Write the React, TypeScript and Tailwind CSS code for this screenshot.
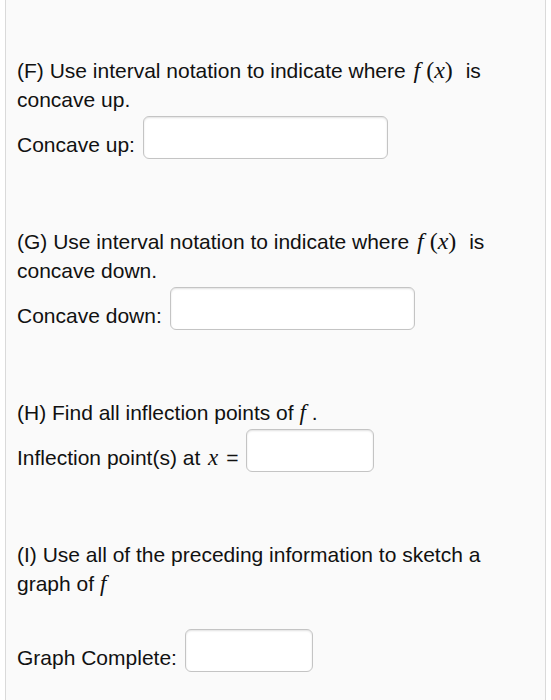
import React from 'react';

const MathVar = ({ children }: { children: React.ReactNode }) => (
    <span className="font-['Liberation_Serif',serif] italic text-[23px]">{children}</span>
);

const Fx = () => (
    <span className="font-['Liberation_Serif',serif] text-[24px] ml-[2px] mr-[7px]">
        <span className="italic mr-[6px]">f</span>(<span className="italic">x</span>)
    </span>
);

const Box = ({ width }: { width: number }) => (
    <input
        type="text"
        style={{ width }}
        className="h-[43px] rounded-[6px] border border-[#c4c4c4] bg-white shadow-[inset_0_1px_2px_rgba(0,0,0,0.12)] outline-none"
    />
);

const Row = ({ label, width }: { label: React.ReactNode; width: number }) => (
    <div className="flex items-end gap-[8px] mt-[2px]">
        <span>{label}</span>
        <Box width={width} />
    </div>
);

export default function App() {
    return (
        <div className="min-h-[700px] bg-white">
            <div className="ml-[5px] w-[541px] min-h-[700px] border-x border-[#dadada] bg-[#fafafa] pl-[11px] pt-[56px] text-[21px] leading-[29px] text-[#111] font-['Liberation_Sans',Arial,sans-serif]">
                <section>
                    <p>(F) Use interval notation to indicate where <Fx /> is</p>
                    <p>concave up.</p>
                    <Row label="Concave up:" width={245} />
                </section>

                <section className="mt-[68px]">
                    <p>(G) Use interval notation to indicate where <Fx /> is</p>
                    <p>concave down.</p>
                    <Row label="Concave down:" width={245} />
                </section>

                <section className="mt-[68px]">
                    <p>(H) Find all inflection points of <MathVar>f</MathVar> .</p>
                    <Row
                        label={<>Inflection point(s) at <span className="mx-[2px]"><MathVar>x</MathVar></span> =</>}
                        width={128}
                    />
                </section>

                <section className="mt-[68px]">
                    <p>(I) Use all of the preceding information to sketch a</p>
                    <p>graph of <MathVar>f</MathVar></p>
                    <div className="mt-[31px]">
                        <Row label="Graph Complete:" width={128} />
                    </div>
                </section>
            </div>
        </div>
    );
}
